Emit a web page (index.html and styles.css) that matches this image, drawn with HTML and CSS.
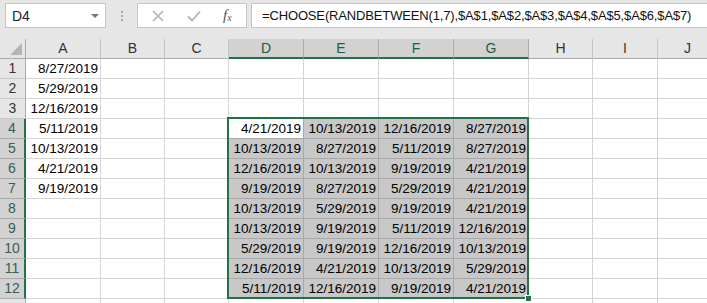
FILE: index.html
```html
<!DOCTYPE html>
<html>
<head>
<meta charset="utf-8">
<link rel="stylesheet" href="styles.css">
</head>
<body>
<div class="app">
  <div class="toolbar">
    <div class="namebox"><span class="name">D4</span><span class="dd"></span></div>
    <div class="grip"><i></i><i></i><i></i></div>
    <div class="fxbox">
      <svg class="ico" width="14" height="14" viewBox="0 0 14 14"><path d="M2 2 L12 12 M12 2 L2 12" stroke="#b3b3b3" stroke-width="1.6" fill="none"/></svg>
      <svg class="ico" width="16" height="14" viewBox="0 0 16 14"><path d="M2 7.5 L6 11.5 L14 2.5" stroke="#b3b3b3" stroke-width="1.8" fill="none"/></svg>
      <span class="fx">f<sub>x</sub></span>
    </div>
    <div class="formula">=CHOOSE(RANDBETWEEN(1,7),$A$1,$A$2,$A$3,$A$4,$A$5,$A$6,$A$7)</div>
  </div>
  <div class="sheet">
    <div class="grid">
      <div class="corner"><span class="tri"></span></div>
      <div class="ch">A</div><div class="ch">B</div><div class="ch">C</div>
      <div class="ch on">D</div><div class="ch on">E</div><div class="ch on">F</div><div class="ch on">G</div>
      <div class="ch">H</div><div class="ch">I</div><div class="ch last">J</div>

      <div class="rh">1</div><div class="c">8/27/2019</div><div class="c"></div><div class="c"></div><div class="c"></div><div class="c"></div><div class="c"></div><div class="c"></div><div class="c"></div><div class="c"></div><div class="c"></div>
      <div class="rh">2</div><div class="c">5/29/2019</div><div class="c"></div><div class="c"></div><div class="c"></div><div class="c"></div><div class="c"></div><div class="c"></div><div class="c"></div><div class="c"></div><div class="c"></div>
      <div class="rh">3</div><div class="c">12/16/2019</div><div class="c"></div><div class="c"></div><div class="c"></div><div class="c"></div><div class="c"></div><div class="c"></div><div class="c"></div><div class="c"></div><div class="c"></div>

      <div class="rh on">4</div><div class="c">5/11/2019</div><div class="c"></div><div class="c"></div><div class="c act">4/21/2019</div><div class="c s">10/13/2019</div><div class="c s">12/16/2019</div><div class="c s">8/27/2019</div><div class="c"></div><div class="c"></div><div class="c"></div>
      <div class="rh on">5</div><div class="c">10/13/2019</div><div class="c"></div><div class="c"></div><div class="c s">10/13/2019</div><div class="c s">8/27/2019</div><div class="c s">5/11/2019</div><div class="c s">8/27/2019</div><div class="c"></div><div class="c"></div><div class="c"></div>
      <div class="rh on">6</div><div class="c">4/21/2019</div><div class="c"></div><div class="c"></div><div class="c s">12/16/2019</div><div class="c s">10/13/2019</div><div class="c s">9/19/2019</div><div class="c s">4/21/2019</div><div class="c"></div><div class="c"></div><div class="c"></div>
      <div class="rh on">7</div><div class="c">9/19/2019</div><div class="c"></div><div class="c"></div><div class="c s">9/19/2019</div><div class="c s">8/27/2019</div><div class="c s">5/29/2019</div><div class="c s">4/21/2019</div><div class="c"></div><div class="c"></div><div class="c"></div>
      <div class="rh on">8</div><div class="c"></div><div class="c"></div><div class="c"></div><div class="c s">10/13/2019</div><div class="c s">5/29/2019</div><div class="c s">9/19/2019</div><div class="c s">4/21/2019</div><div class="c"></div><div class="c"></div><div class="c"></div>
      <div class="rh on">9</div><div class="c"></div><div class="c"></div><div class="c"></div><div class="c s">10/13/2019</div><div class="c s">9/19/2019</div><div class="c s">5/11/2019</div><div class="c s">12/16/2019</div><div class="c"></div><div class="c"></div><div class="c"></div>
      <div class="rh on">10</div><div class="c"></div><div class="c"></div><div class="c"></div><div class="c s">5/29/2019</div><div class="c s">9/19/2019</div><div class="c s">12/16/2019</div><div class="c s">10/13/2019</div><div class="c"></div><div class="c"></div><div class="c"></div>
      <div class="rh on">11</div><div class="c"></div><div class="c"></div><div class="c"></div><div class="c s">12/16/2019</div><div class="c s">4/21/2019</div><div class="c s">10/13/2019</div><div class="c s">5/29/2019</div><div class="c"></div><div class="c"></div><div class="c"></div>
      <div class="rh on">12</div><div class="c"></div><div class="c"></div><div class="c"></div><div class="c s">5/11/2019</div><div class="c s">12/16/2019</div><div class="c s">9/19/2019</div><div class="c s">4/21/2019</div><div class="c"></div><div class="c"></div><div class="c"></div>
      <div class="rh"></div><div class="c"></div><div class="c"></div><div class="c"></div><div class="c"></div><div class="c"></div><div class="c"></div><div class="c"></div><div class="c"></div><div class="c"></div><div class="c"></div>
    </div>
    <div class="selbox"><span class="handle"></span></div>
  </div>
</div>
</body>
</html>
```
FILE: styles.css
```css
* { box-sizing: border-box; }
html, body { margin: 0; padding: 0; }
body {
  width: 707px;
  height: 303px;
  overflow: hidden;
  background: #ffffff;
  font-family: "Liberation Sans", Arial, sans-serif;
  color: #000;
}
.app { width: 707px; height: 303px; overflow: hidden; }

.toolbar {
  height: 39px;
  background: #e6e6e6;
  display: flex;
  align-items: flex-start;
  padding: 3px 0 0 5px;
}
.namebox {
  flex: 0 0 101px;
  height: 25px;
  background: #fff;
  border: 1px solid #c6c6c6;
  display: flex;
  align-items: center;
  justify-content: space-between;
  padding: 0 6px 0 6px;
  font-size: 14px;
  color: #222;
}
.dd {
  width: 0; height: 0;
  border-left: 4px solid transparent;
  border-right: 4px solid transparent;
  border-top: 4px solid #777;
}
.grip {
  flex: 0 0 31px;
  height: 25px;
  display: flex;
  flex-direction: column;
  align-items: center;
  justify-content: center;
  gap: 2px;
}
.grip i { display: block; width: 2px; height: 2px; background: #a8a8a8; }
.fxbox {
  flex: 0 0 110px;
  height: 25px;
  background: #fff;
  border: 1px solid #c6c6c6;
  display: flex;
  align-items: center;
  padding: 0 8px 0 13px;
  gap: 21px;
}
.fx {
  font-family: "Liberation Serif", "Times New Roman", serif;
  font-style: italic;
  font-size: 15px;
  color: #555;
}
.fx sub { font-size: 10px; vertical-align: -1px; }
.formula {
  margin-left: 4px;
  flex: 1 1 auto;
  min-width: 0;
  height: 25px;
  background: #fff;
  border: 1px solid #c6c6c6;
  border-right: none;
  padding-left: 10px;
  font-size: 13px;
  letter-spacing: -0.15px;
  line-height: 23px;
  white-space: nowrap;
  overflow: hidden;
  color: #111;
}

.sheet { position: relative; }
.grid {
  display: grid;
  grid-template-columns: 26px 75px 64px 64px 75px 75px 75px 75px 64px 65px 60px;
  grid-template-rows: repeat(14, 20px);
}
.corner {
  background: #e6e6e6;
  border-right: 1px solid #ababab;
  border-bottom: 1px solid #ababab;
  position: relative;
}
.tri {
  position: absolute;
  right: 3px;
  bottom: 3px;
  width: 0; height: 0;
  border-left: 12px solid transparent;
  border-bottom: 12px solid #b4b4b4;
}
.ch {
  background: #e6e6e6;
  border-right: 1px solid #c6c6c6;
  border-bottom: 1px solid #ababab;
  text-align: center;
  font-size: 14px;
  line-height: 19px;
  color: #333;
}
.ch.on {
  background: #d2d2d2;
  border-bottom: 2px solid #217346;
  border-right-color: #ababab;
  color: #1d5f3b;
}
.rh {
  background: #e6e6e6;
  border-right: 1px solid #ababab;
  border-bottom: 1px solid #c8c8c8;
  text-align: center;
  font-size: 14px;
  line-height: 19px;
  color: #333;
}
.rh.on {
  background: #d2d2d2;
  border-right: 2px solid #217346;
  border-bottom-color: #ababab;
  color: #3b5f4b;
}
.c {
  border-right: 1px solid #d4d4d4;
  border-bottom: 1px solid #d4d4d4;
  text-align: right;
  padding-right: 2px;
  font-size: 13.5px;
  line-height: 19px;
  white-space: nowrap;
  overflow: hidden;
}
.c.s {
  background: #c8c8c8;
  border-right-color: #a9a9a9;
  border-bottom-color: #a9a9a9;
}
.c.act { background: #fff; border-right-color: #a9a9a9; border-bottom-color: #a9a9a9; }

.selbox {
  position: absolute;
  left: 227px;
  top: 78px;
  width: 302px;
  height: 182px;
  border: 2px solid #217346;
  pointer-events: none;
}
.handle {
  position: absolute;
  right: -5px;
  bottom: -5px;
  width: 7px;
  height: 7px;
  background: #217346;
  border: 1px solid #fff;
}
```
